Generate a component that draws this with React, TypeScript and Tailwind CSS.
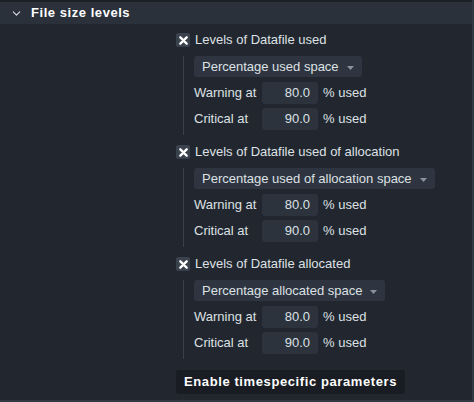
import { ChevronDown } from 'lucide-react';

type Group = {
  title: string;
  mode: string;
};

const groups: Group[] = [
  { title: 'Levels of Datafile used', mode: 'Percentage used space' },
  { title: 'Levels of Datafile used of allocation', mode: 'Percentage used of allocation space' },
  { title: 'Levels of Datafile allocated', mode: 'Percentage allocated space' },
];

function CheckMark() {
  return (
    <span className="w-[14px] h-[14px] rounded-[2px] bg-[#3a424d] flex items-center justify-center">
      <svg width="9" height="9" viewBox="0 0 10 10">
        <path d="M1.5 1.5 L8.5 8.5 M8.5 1.5 L1.5 8.5" stroke="#ffffff" strokeWidth="2.6" strokeLinecap="round" />
      </svg>
    </span>
  );
}

function LevelRow({ label, value }: { label: string; value: string }) {
  return (
    <div className="flex items-center h-[22px]">
      <span className="w-[68px]">{label}</span>
      <span className="w-[56px] h-[22px] rounded-[3px] bg-[#2c333d] flex items-center justify-end pr-[8px]">{value}</span>
      <span className="ml-[5px]">% used</span>
    </div>
  );
}

function LevelGroup({ group, first }: { group: Group; first: boolean }) {
  return (
    <div className={first ? '' : 'mt-[10px]'}>
      <div className="flex items-center h-[14px] gap-[5px]">
        <CheckMark />
        <span>{group.title}</span>
      </div>
      <div className="mt-[9px] ml-[7px] border-l border-[#3a414b] pl-[10px] pb-[5px]">
        <div className="inline-flex items-center h-[21px] rounded-[3px] bg-[#2e3540] pl-[8px] pr-[8px] gap-[8px]">
          <span>{group.mode}</span>
          <svg width="7" height="5" viewBox="0 0 7 5" className="mt-[3px]">
            <path d="M0 0 H7 L3.5 4 Z" fill="#8a929c" />
          </svg>
        </div>
        <div className="mt-[5px]">
          <LevelRow label="Warning at" value="80.0" />
        </div>
        <div className="mt-[4px]">
          <LevelRow label="Critical at" value="90.0" />
        </div>
      </div>
    </div>
  );
}

export default function App() {
  return (
    <div
      className="w-[474px] h-[402px] bg-[#22272f] text-[#dde0e4] text-[13px] border-r-2 border-b-2 border-[#323942] overflow-hidden"
      style={{ fontFamily: '"Liberation Sans", Arial, sans-serif' }}
    >
      <div className="h-[24px] bg-[#2a313a] border-t-2 border-[#1b1f26] flex items-center pl-[10px]">
        <ChevronDown size={13} strokeWidth={2} className="text-[#d8dbe0]" />
        <span className="ml-[8px] font-bold tracking-[0.55px] text-white">File size levels</span>
      </div>
      <div className="pl-[176px] pt-[9px]">
        {groups.map((g, i) => (
          <LevelGroup key={g.title} group={g} first={i === 0} />
        ))}
        <button className="mt-[11px] h-[24px] px-[8px] rounded-[3px] bg-[#191d23] font-bold tracking-[0.6px] text-white">
          Enable timespecific parameters
        </button>
      </div>
    </div>
  );
}
